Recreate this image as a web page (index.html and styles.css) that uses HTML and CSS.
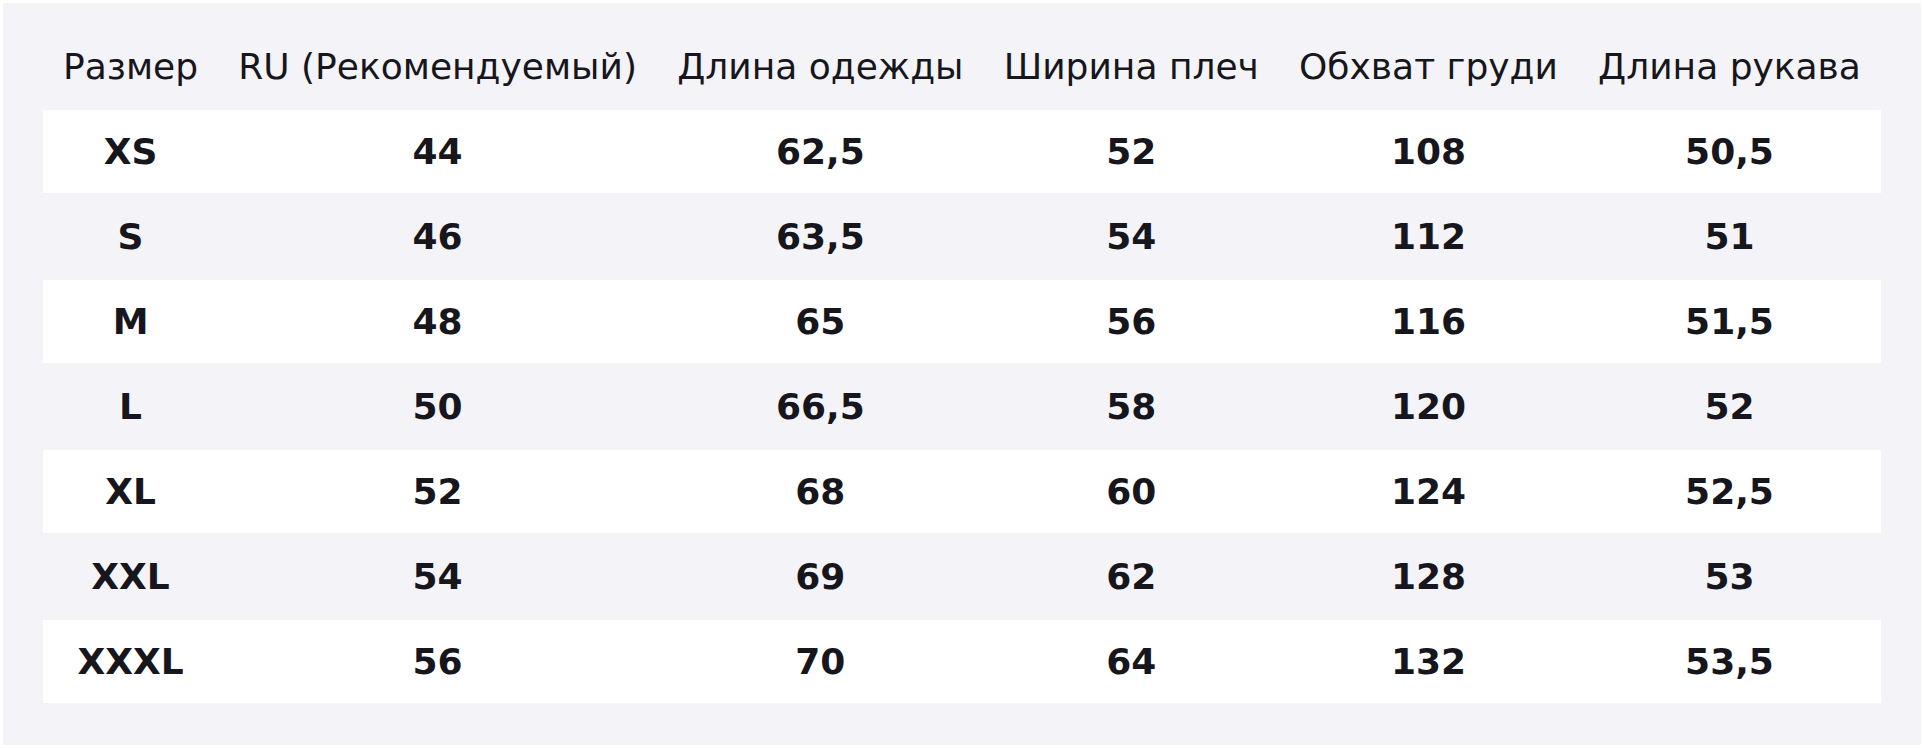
FILE: index.html
```html
<!DOCTYPE html>
<html lang="ru">
<head>
<meta charset="utf-8">
<title>Таблица размеров</title>
<link rel="stylesheet" href="styles.css">
</head>
<body>
<div class="panel">
  <table class="sizes">
    <thead>
      <tr>
        <th>Размер</th>
        <th>RU (Рекомендуемый)</th>
        <th>Длина одежды</th>
        <th>Ширина плеч</th>
        <th>Обхват груди</th>
        <th>Длина рукава</th>
      </tr>
    </thead>
    <tbody>
      <tr><td>XS</td><td>44</td><td>62,5</td><td>52</td><td>108</td><td>50,5</td></tr>
      <tr><td>S</td><td>46</td><td>63,5</td><td>54</td><td>112</td><td>51</td></tr>
      <tr><td>M</td><td>48</td><td>65</td><td>56</td><td>116</td><td>51,5</td></tr>
      <tr><td>L</td><td>50</td><td>66,5</td><td>58</td><td>120</td><td>52</td></tr>
      <tr><td>XL</td><td>52</td><td>68</td><td>60</td><td>124</td><td>52,5</td></tr>
      <tr><td>XXL</td><td>54</td><td>69</td><td>62</td><td>128</td><td>53</td></tr>
      <tr><td>XXXL</td><td>56</td><td>70</td><td>64</td><td>132</td><td>53,5</td></tr>
    </tbody>
  </table>
</div>
</body>
</html>
```

FILE: styles.css
```css
html, body {
  margin: 0;
  background: #ffffff;
}

body {
  padding: 3px;
  font-family: "DejaVu Sans", sans-serif;
  color: #16161c;
}

.panel {
  background: #f4f3f8;
  padding: 40px;
}

.sizes {
  width: 100%;
  border-collapse: separate;
  border-spacing: 0 2px;
  font-size: 36px;
  line-height: 43px;
}

.sizes th {
  font-weight: normal;
  padding: 0 20px 20px;
  text-align: center;
  white-space: nowrap;
}

.sizes td {
  font-weight: bold;
  padding: 20px;
  text-align: center;
  white-space: nowrap;
}

.sizes tbody tr:nth-child(odd) td {
  background: #ffffff;
}
```
